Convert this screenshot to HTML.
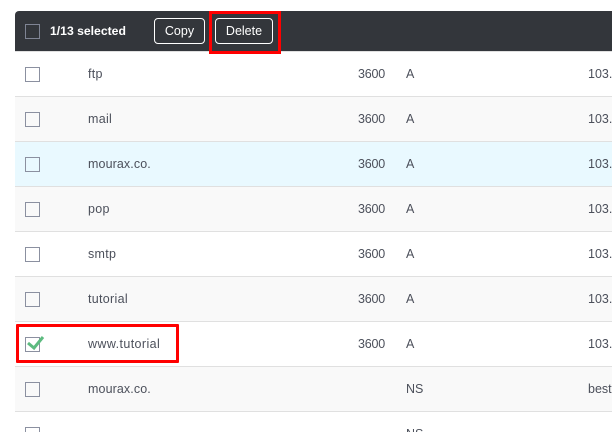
<!DOCTYPE html>
<html><head><meta charset="utf-8"><style>
html,body{margin:0;padding:0;background:#fff;width:612px;height:432px;overflow:hidden}
#w{position:relative;width:612px;height:432px;overflow:hidden;font-family:"Liberation Sans",sans-serif;font-size:12.5px;color:#4c505b}
.a{position:absolute}
.r{position:absolute;left:15px;width:597px;height:44px;border-bottom:1px solid #e0e0e0}
.c{position:absolute;left:25px;width:13px;height:13px;border:1px solid #8b90a0;background:transparent}
.t{position:absolute;line-height:16px;white-space:nowrap}
.n{left:88px;letter-spacing:.3px}.l{left:358px;letter-spacing:-.2px}.y{left:406px}.v{left:588px}
.b{position:absolute;top:18px;height:24px;border:1px solid #fff;border-radius:4px;color:#fff;line-height:24px;text-align:center;font-size:12.5px}
</style></head><body><div id="w">
<div class="a" style="left:15px;top:11px;width:597px;height:40px;background:#33363b;border-top-left-radius:4px"></div>
<div class="a" style="left:15px;top:51px;width:597px;height:1px;background:#e0e0e0"></div>
<div class="c" style="top:24px;border-color:#7f8494"></div>
<div class="t" style="left:50px;top:23px;color:#fff;font-weight:bold;font-size:12.2px">1/13 selected</div>
<div class="b" style="left:154px;width:49px">Copy</div>
<div class="b" style="left:215px;width:56px">Delete</div>

<div class="r" style="top:52px;background:#fff"></div>
<div class="r" style="top:97px;background:#f9f9f9"></div>
<div class="r" style="top:142px;background:#e9f9ff"></div>
<div class="r" style="top:187px;background:#f9f9f9"></div>
<div class="r" style="top:232px;background:#fff"></div>
<div class="r" style="top:277px;background:#f9f9f9"></div>
<div class="r" style="top:322px;background:#fff"></div>
<div class="r" style="top:367px;background:#f9f9f9"></div>

<div class="c" style="top:67px"></div>
<div class="c" style="top:112px"></div>
<div class="c" style="top:157px"></div>
<div class="c" style="top:202px"></div>
<div class="c" style="top:247px"></div>
<div class="c" style="top:292px"></div>
<div class="c" style="top:337px"></div>
<div class="c" style="top:382px"></div>
<div class="c" style="top:427px;height:4px;border-bottom:none"></div>

<div class="t n" style="top:66px">ftp</div><div class="t l" style="top:66px">3600</div><div class="t y" style="top:66px">A</div><div class="t v" style="top:66px">103.</div>
<div class="t n" style="top:111px">mail</div><div class="t l" style="top:111px">3600</div><div class="t y" style="top:111px">A</div><div class="t v" style="top:111px">103.</div>
<div class="t n" style="top:156px;letter-spacing:.1px">mourax.co.</div><div class="t l" style="top:156px">3600</div><div class="t y" style="top:156px">A</div><div class="t v" style="top:156px">103.</div>
<div class="t n" style="top:201px">pop</div><div class="t l" style="top:201px">3600</div><div class="t y" style="top:201px">A</div><div class="t v" style="top:201px">103.</div>
<div class="t n" style="top:246px">smtp</div><div class="t l" style="top:246px">3600</div><div class="t y" style="top:246px">A</div><div class="t v" style="top:246px">103.</div>
<div class="t n" style="top:291px">tutorial</div><div class="t l" style="top:291px">3600</div><div class="t y" style="top:291px">A</div><div class="t v" style="top:291px">103.</div>
<div class="t n" style="top:336px;letter-spacing:.4px">www.tutorial</div><div class="t l" style="top:336px">3600</div><div class="t y" style="top:336px">A</div><div class="t v" style="top:336px">103.</div>
<div class="t n" style="top:381px;letter-spacing:.1px">mourax.co.</div><div class="t y" style="top:381px">NS</div><div class="t v" style="top:381px;width:24px;overflow:hidden">best.</div>
<div class="t y" style="top:426px;height:6px;overflow:hidden">NS</div>

<svg class="a" style="left:25px;top:333px" width="22" height="20" viewBox="0 0 22 20"><path d="M3 10 L9 15 L18 4" fill="none" stroke="#5dbb80" stroke-width="3"/></svg>

<div class="a" style="left:209px;top:11px;width:66px;height:37px;border:3px solid #f00"></div>
<div class="a" style="left:16px;top:324px;width:157px;height:33px;border:3px solid #f00;border-radius:1px"></div>
</div></body></html>
